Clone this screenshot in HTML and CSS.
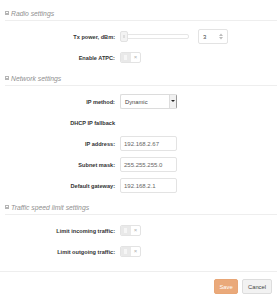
FILE: index.html
```html
<!DOCTYPE html>
<html lang="en">
<head>
    <meta charset="UTF-8"/>
    <meta content="width=device-width, initial-scale=1.0" name="viewport"/>
    <title>Wireless Settings</title>
    <link rel="stylesheet" href="styles.css">
</head>
<body>
<form class="settings">
    <!-- Radio -->
    <div class="section">
        <h3 class="section-title"><span class="collapse-icon"></span>Radio settings</h3>
        <div class="section-body">
            <div class="row">
                <label class="row-label">Tx power, dBm:</label>
                <div class="slider">
                    <span class="slider-track"></span>
                    <span class="slider-handle"></span>
                </div>
                <div class="spinner">
                    <span class="spinner-value">3</span>
                    <svg class="spinner-arrows" width="4" height="7" viewBox="0 0 4 7">
                        <path d="M0 3 L2 0.5 L4 3 Z M0 4 L2 6.5 L4 4 Z" fill="#bbb"/>
                    </svg>
                </div>
            </div>
            <div class="row">
                <label class="row-label">Enable ATPC:</label>
                <div class="toggle"><span class="toggle-knob"></span><span class="toggle-x">&times;</span></div>
            </div>
        </div>
    </div>

    <!-- Network -->
    <div class="section">
        <h3 class="section-title"><span class="collapse-icon"></span>Network settings</h3>
        <div class="section-body">
            <div class="row">
                <label class="row-label">IP method:</label>
                <div class="select">
                    <span class="select-value">Dynamic</span>
                    <span class="select-arrow"></span>
                </div>
            </div>
            <div class="row">
                <span class="row-label">DHCP IP fallback</span>
            </div>
            <div class="row">
                <label class="row-label">IP address:</label>
                <div class="text-input">192.168.2.67</div>
            </div>
            <div class="row">
                <label class="row-label">Subnet mask:</label>
                <div class="text-input">255.255.255.0</div>
            </div>
            <div class="row">
                <label class="row-label">Default gateway:</label>
                <div class="text-input">192.168.2.1</div>
            </div>
        </div>
    </div>

    <!-- Traffic -->
    <div class="section section-last">
        <h3 class="section-title"><span class="collapse-icon"></span>Traffic speed limit settings</h3>
        <div class="section-body">
            <div class="row">
                <label class="row-label">Limit incoming traffic:</label>
                <div class="toggle"><span class="toggle-knob"></span><span class="toggle-x">&times;</span></div>
            </div>
            <div class="row">
                <label class="row-label">Limit outgoing traffic:</label>
                <div class="toggle"><span class="toggle-knob"></span><span class="toggle-x">&times;</span></div>
            </div>
        </div>
    </div>

    <div class="form-actions">
        <button type="button" class="btn btn-save">Save</button>
        <button type="button" class="btn btn-cancel">Cancel</button>
    </div>
</form>
</body>
</html>
```

FILE: styles.css
```css
/* Base */
body {
    margin: 0;
    padding: 0;
    width: 277px;
    background-color: #ffffff;
    font-family: "Liberation Sans", Arial, sans-serif;
    color: #333333;
}

.settings {
    padding-top: 6px;
}

/* Section headers */
.section + .section {
    margin-top: 3px;
}

.section-last {
    margin-top: 4px !important;
}

.section-title {
    display: flex;
    align-items: center;
    gap: 2px;
    margin: 0 0 0 5px;
    height: 14px;
    font-size: 6.8px;
    font-style: italic;
    font-weight: normal;
    color: #8f8f8f;
    border-bottom: 1px solid #eeeeee;
}

.collapse-icon {
    position: relative;
    width: 4px;
    height: 4px;
    border: 1px solid #b5b5b5;
    box-sizing: border-box;
}

.collapse-icon::after {
    content: "";
    position: absolute;
    left: 0;
    right: 0;
    top: 1px;
    height: 1px;
    background-color: #b5b5b5;
}

.section-body {
    padding-top: 5px;
}

/* Rows */
.row {
    display: flex;
    align-items: center;
    height: 21px;
}

.row-label {
    width: 115px;
    margin-right: 5px;
    text-align: right;
    font-size: 5.6px;
    font-weight: bold;
    color: #333333;
}

/* Slider */
.slider {
    position: relative;
    width: 69px;
    height: 11px;
}

.slider-track {
    position: absolute;
    left: 2px;
    right: 0;
    top: 3px;
    height: 5px;
    border: 1px solid #e6e6e6;
    border-radius: 2px;
    box-sizing: border-box;
    background-color: #ffffff;
}

.slider-handle {
    position: absolute;
    left: 0;
    top: 0;
    width: 8px;
    height: 11px;
    border: 1px solid #e2e2e2;
    border-radius: 2px;
    box-sizing: border-box;
    background-color: #f3f3f3;
}

.slider-handle::after {
    content: "";
    position: absolute;
    left: 2px;
    top: 3px;
    width: 2px;
    height: 3px;
    background-color: #dddddd;
}

/* Number spinner */
.spinner {
    display: flex;
    align-items: center;
    justify-content: space-between;
    margin-left: 9px;
    width: 30px;
    height: 15px;
    padding: 0 4px 0 4px;
    border: 1px solid #e3e3e3;
    border-radius: 2px;
    box-sizing: border-box;
    font-size: 6px;
    color: #444444;
}

/* Toggle */
.toggle {
    display: flex;
    width: 21px;
    height: 11px;
    border: 1px solid #e3e3e3;
    border-radius: 2px;
    box-sizing: border-box;
    overflow: hidden;
}

.toggle-knob {
    position: relative;
    width: 10px;
    background-color: #e9e9e9;
}

.toggle-knob::after {
    content: "";
    position: absolute;
    left: 3px;
    top: 2px;
    width: 3px;
    height: 5px;
    background-color: #f6f6f6;
}

.toggle-x {
    flex: 1;
    text-align: center;
    font-size: 6px;
    line-height: 9px;
    color: #b0b0b0;
}

/* Select */
.select {
    display: flex;
    align-items: center;
    justify-content: space-between;
    width: 57px;
    height: 15px;
    padding-left: 4px;
    border: 1px solid #dcdcdc;
    border-right-color: #999999;
    border-radius: 2px;
    box-sizing: border-box;
    font-size: 5.8px;
    color: #444444;
}

.select-arrow {
    position: relative;
    width: 6px;
    height: 13px;
    background-color: #f1f1f1;
    border-left: 1px solid #dddddd;
}

.select-arrow::after {
    content: "";
    position: absolute;
    left: 1px;
    top: 5px;
    border-left: 2px solid transparent;
    border-right: 2px solid transparent;
    border-top: 2px solid #222222;
}

/* Text input */
.text-input {
    display: flex;
    align-items: center;
    width: 57px;
    height: 15px;
    padding-left: 3px;
    border: 1px solid #e3e3e3;
    border-radius: 2px;
    box-sizing: border-box;
    font-size: 6px;
    color: #666666;
}

/* Footer buttons */
.form-actions {
    display: flex;
    justify-content: flex-end;
    gap: 4px;
    margin-top: 9px;
    padding: 7px 5px 0;
    border-top: 1px solid #eeeeee;
}

.btn {
    height: 15px;
    padding: 0;
    border-radius: 2px;
    font-family: "Liberation Sans", Arial, sans-serif;
    font-size: 5.8px;
    cursor: pointer;
}

.btn-save {
    width: 24px;
    border: 1px solid #e8a676;
    background-color: #eaa97a;
    color: #ffffff;
}

.btn-cancel {
    width: 30px;
    border: 1px solid #dddddd;
    background-color: #f2f2f2;
    color: #444444;
}
```
